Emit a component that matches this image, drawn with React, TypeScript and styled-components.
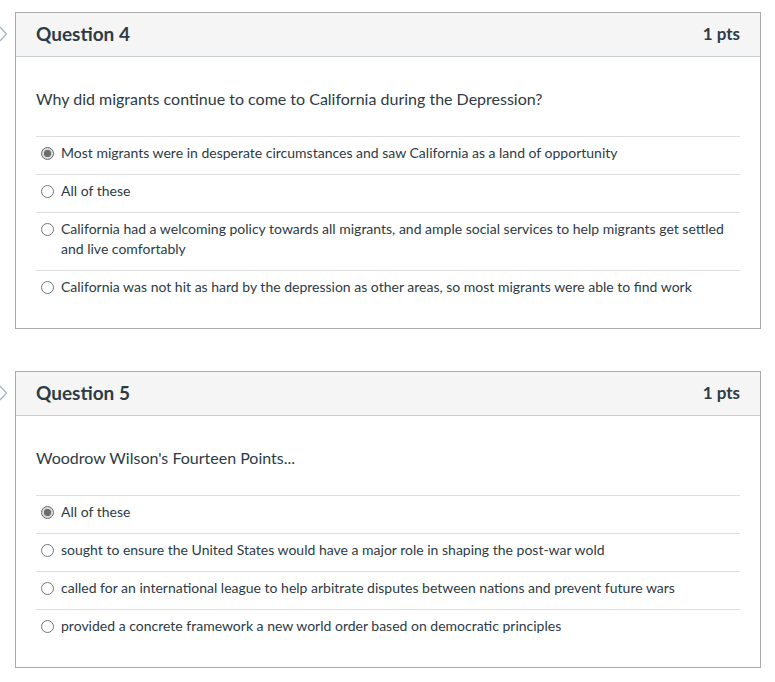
import React from "react";
import styled, { createGlobalStyle } from "styled-components";

const Global = createGlobalStyle`
  html, body { margin: 0; padding: 0; background: #ffffff; }
  body { font-family: Lato, "Open Sans", "Liberation Sans", sans-serif; color: #2d3b45; }
`;

const Page = styled.div`
  display: flex;
  flex-direction: column;
  gap: 42px;
  padding: 12px 14px 0 15px;
  width: 746px;
`;

const Card = styled.section`
  position: relative;
  border: 1px solid #aaaaaa;
  background: #ffffff;
`;

const Arrow = styled.svg`
  position: absolute;
  left: -17px;
  top: 13px;
  width: 9px;
  height: 16px;
`;

const Header = styled.header`
  box-sizing: border-box;
  display: flex;
  align-items: center;
  justify-content: space-between;
  height: 44px;
  padding: 0 20px 3px;
  background: #f5f5f5;
  border-bottom: 1px solid #c7cdd1;
`;

const Title = styled.h2`
  margin: 0;
  font-size: 19px;
  font-weight: 700;
  color: #2d3b45;
`;

const Points = styled.span`
  font-size: 17px;
  font-weight: 700;
  color: #2d3b45;
`;

const Body = styled.div`
  padding: 30px 20px 20px;
`;

const Prompt = styled.p`
  margin: 0 0 25px;
  font-size: 16px;
  line-height: 24px;
`;

const Answers = styled.ul`
  list-style: none;
  margin: 0;
  padding: 0;
`;

const Row = styled.li`
  display: flex;
  align-items: flex-start;
  gap: 7px;
  border-top: 1px solid #dddddd;
  padding: 6px 0 11px 5px;
  font-size: 14px;
  line-height: 20px;
`;

const Radio = styled.span<{ $checked?: boolean }>`
  flex: none;
  box-sizing: border-box;
  width: 13px;
  height: 13px;
  margin-top: 4px;
  border-radius: 50%;
  border: 1px solid ${(p) => (p.$checked ? "#6b6b6b" : "#767676")};
  background: ${(p) =>
    p.$checked
      ? "radial-gradient(circle, #6d6d6d 0 3.4px, #d9d9d9 3.9px 100%)"
      : "#ffffff"};
`;

type Q = { title: string; prompt: string; answers: string[]; selected: number };

const questions: Q[] = [
  {
    title: "Question 4",
    prompt: "Why did migrants continue to come to California during the Depression?",
    selected: 0,
    answers: [
      "Most migrants were in desperate circumstances and saw California as a land of opportunity",
      "All of these",
      "California had a welcoming policy towards all migrants, and ample social services to help migrants get settled and live comfortably",
      "California was not hit as hard by the depression as other areas, so most migrants were able to find work",
    ],
  },
  {
    title: "Question 5",
    prompt: "Woodrow Wilson's Fourteen Points...",
    selected: 0,
    answers: [
      "All of these",
      "sought to ensure the United States would have a major role in shaping the post-war wold",
      "called for an international league to help arbitrate disputes between nations and prevent future wars",
      "provided a concrete framework a new world order based on democratic principles",
    ],
  },
];

export default function App() {
  return (
    <>
      <Global />
      <Page>
        {questions.map((q) => (
          <Card key={q.title}>
            <Arrow viewBox="0 0 9 16">
              <path d="M1 1 L7.5 8 L1 15" fill="none" stroke="#9fb3c6" strokeWidth="1.2" />
            </Arrow>
            <Header>
              <Title>{q.title}</Title>
              <Points>1 pts</Points>
            </Header>
            <Body>
              <Prompt>{q.prompt}</Prompt>
              <Answers>
                {q.answers.map((a, i) => (
                  <Row key={i}>
                    <Radio $checked={i === q.selected} />
                    <span>{a}</span>
                  </Row>
                ))}
              </Answers>
            </Body>
          </Card>
        ))}
      </Page>
    </>
  );
}
